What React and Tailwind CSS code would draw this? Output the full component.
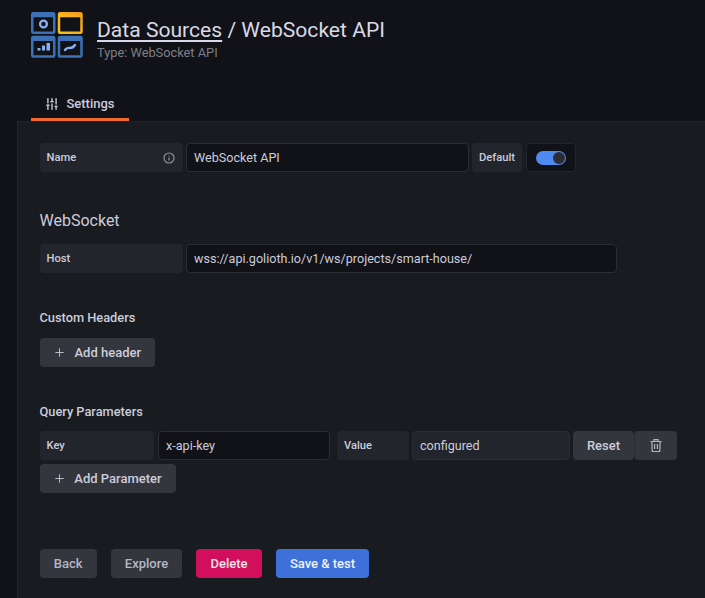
import React from "react";
import { Plus, SlidersVertical } from "lucide-react";

function Logo() {
  return (
    <svg width="52" height="46" viewBox="0 0 52 46" fill="none" className="shrink-0">
      <defs>
        <linearGradient id="yg" x1="0" y1="1" x2="1" y2="0">
          <stop offset="0" stopColor="#f5c518" />
          <stop offset="1" stopColor="#f59a23" />
        </linearGradient>
      </defs>
      <rect x="1.25" y="1.25" width="22" height="19.5" rx="1" fill="#111217" stroke="#3d71b5" strokeWidth="2.5" />
      <rect x="1.25" y="1.25" width="22" height="4" fill="#3d71b5" />
      <circle cx="12.5" cy="12" r="3.4" stroke="#84aff1" strokeWidth="2.4" />
      <rect x="28" y="1.25" width="22.5" height="19.5" rx="1" fill="#111217" stroke="url(#yg)" strokeWidth="2.5" />
      <rect x="28" y="1.25" width="22.5" height="4" fill="url(#yg)" />
      <rect x="1.25" y="25" width="22" height="19.5" rx="1" fill="#111217" stroke="#3d71b5" strokeWidth="2.5" />
      <rect x="1.25" y="25" width="22" height="4" fill="#3d71b5" />
      <path d="M6.5 38.5h3v-2.5h-3zM11 38.5h3v-5h-3zM15.5 38.5h3.5v-7.5h-3.5z" fill="#84aff1" />
      <rect x="28" y="25" width="22.5" height="19.5" rx="1" fill="#111217" stroke="#3d71b5" strokeWidth="2.5" />
      <rect x="28" y="25" width="22.5" height="4" fill="#3d71b5" />
      <path d="M34 38c2-3 4-2 5-2s3 0 5-3" stroke="#84aff1" strokeWidth="2.4" strokeLinecap="round" />
    </svg>
  );
}

function InfoIcon() {
  return (
    <svg width="12" height="12" viewBox="0 0 12 12" fill="none" className="mr-[1px] text-[#8e8f98]">
      <circle cx="6" cy="6" r="5" stroke="currentColor" strokeWidth="1.2" />
      <path d="M6 5.5v3M6 3.4v.8" stroke="currentColor" strokeWidth="1.3" />
    </svg>
  );
}

function TrashIcon() {
  return (
    <svg width="14" height="15" viewBox="0 0 14 15" fill="none" stroke="currentColor" strokeWidth="1.2">
      <path d="M1.5 3.5h11M5 3.5V1.6h4v1.9M2.8 3.5l.5 10h7.4l.5-10M5.6 6v5M8.4 6v5" />
    </svg>
  );
}

function Label({ className = "", children }) {
  return (
    <div className={`flex h-[29px] shrink-0 items-center justify-between rounded-sm bg-[#22252b] px-[7px] pt-[1px] text-[11.2px] font-medium text-[#ccccdc] ${className}`}>
      {children}
    </div>
  );
}

function Field({ className = "", children }) {
  return (
    <div className={`flex h-[29px] shrink-0 items-center rounded-sm border border-[#2a2d33] pl-[7px] pt-[1px] text-[12.6px] text-[#ccccdc] ${className}`}>
      {children}
    </div>
  );
}

function Btn({ className = "", children }) {
  return (
    <div className={`flex h-[29px] shrink-0 items-center justify-center rounded-sm text-[13px] font-medium ${className}`}>
      {children}
    </div>
  );
}

export default function App() {
  return (
    <div className="h-[598px] w-[705px] overflow-hidden bg-[#111217] font-['Roboto',sans-serif] text-[#ccccdc]">
      <header className="flex h-[92px] items-start pl-[31px] pt-[12px]">
        <Logo />
        <div className="ml-[14px] pt-[3px]">
          <h1 className="text-[21.1px] leading-[30px] text-[#d8d9e6]">
            <span className="underline decoration-[1.5px] underline-offset-[3px]">Data Sources</span> / WebSocket API
          </h1>
          <div className="text-[12.8px] leading-[16px] text-[#7e7f88]">Type: WebSocket API</div>
        </div>
      </header>
      <div className="ml-[31px] flex h-[29px] w-[98px] items-start justify-center gap-[7px] border-b-[3px] border-[#f0682e] pt-[3px] text-[13px] font-medium text-[#ccccdc]">
        <SlidersVertical size={14} strokeWidth={2.4} className="mt-[2px]" />
        <span className="leading-[18px]">Settings</span>
      </div>
      <main className="ml-[17px] h-[477px] border-l border-t border-[#22252b] bg-[#181b1f] pl-[21.5px] pt-[21px]">
        <div className="flex">
          <Label className="w-[143.5px]">
            Name
            <InfoIcon />
          </Label>
          <Field className="ml-[3px] w-[283px] bg-[#111217]">WebSocket API</Field>
          <Label className="ml-[3px] w-[50px]">Default</Label>
          <div className="ml-[4px] flex h-[29px] w-[49.5px] items-center justify-center rounded-sm border border-[#22252b] bg-[#111217]">
            <div className="flex h-[14px] w-[30px] items-center justify-end rounded-full bg-[#4d8bf0] pr-[1px]">
              <div className="h-[12px] w-[12px] rounded-full bg-[#2b2d33]" />
            </div>
          </div>
        </div>

        <h2 className="mt-[37px] text-[16px] leading-[24px] text-[#ccccdc]">WebSocket</h2>

        <div className="mt-[11px] flex">
          <Label className="w-[143.5px]">Host</Label>
          <Field className="ml-[3px] w-[430.5px] bg-[#111217]">wss://api.golioth.io/v1/ws/projects/smart-house/</Field>
        </div>

        <h3 className="mt-[36px] text-[12.8px] font-medium leading-[18px] text-[#ccccdc]">Custom Headers</h3>

        <Btn className="mt-[11px] w-[115.5px] gap-[8px] bg-[#33363d] text-[#ccccdc]">
          <Plus size={13} strokeWidth={1.6} />
          Add header
        </Btn>

        <h3 className="mt-[36px] text-[12.8px] font-medium leading-[18px] text-[#ccccdc]">Query Parameters</h3>

        <div className="mt-[10px] flex">
          <Label className="w-[114.5px]">Key</Label>
          <Field className="ml-[4px] w-[171.5px] bg-[#111217]">x-api-key</Field>
          <Label className="ml-[7.5px] w-[71.5px]">Value</Label>
          <Field className="ml-[3.5px] w-[158px] bg-[#22252b]">configured</Field>
          <Btn className="ml-[3px] w-[61px] bg-[#33363d] text-[#ccccdc]">Reset</Btn>
          <Btn className="w-[43px] border-l border-[#2a2d33] bg-[#33363d] text-[#b4b5c0]">
            <TrashIcon />
          </Btn>
        </div>

        <Btn className="mt-[4px] w-[136px] gap-[8px] bg-[#33363d] text-[#ccccdc]">
          <Plus size={13} strokeWidth={1.6} />
          Add Parameter
        </Btn>

        <div className="mt-[56px] flex">
          <Btn className="w-[57.5px] bg-[#33363d] text-[#b6b7c2]">Back</Btn>
          <Btn className="ml-[14px] w-[71px] bg-[#33363d] text-[#b6b7c2]">Explore</Btn>
          <Btn className="ml-[14px] w-[66px] bg-[#d10f5c] text-[#f4e6ec]">Delete</Btn>
          <Btn className="ml-[14px] w-[93px] bg-[#3d71d9] text-[#f0f3fb]">Save &amp; test</Btn>
        </div>
      </main>
    </div>
  );
}
